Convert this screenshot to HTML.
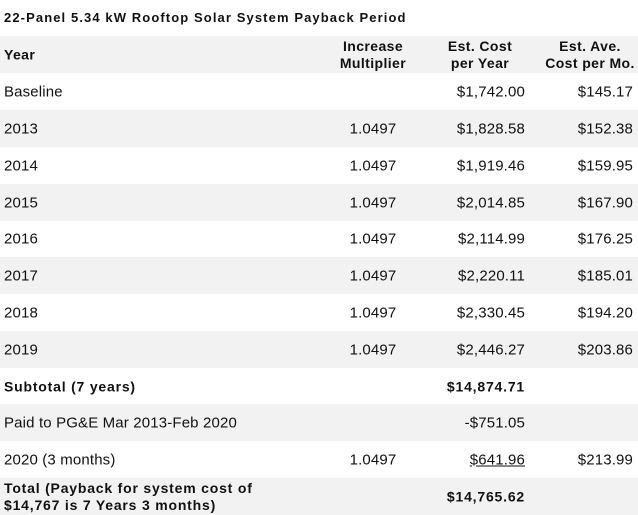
<!DOCTYPE html>
<html><head><style>
body{margin:0;width:638px;height:515px;background:#fff;font-family:"Liberation Sans",Arial,sans-serif;color:#111;overflow:hidden;position:relative}
.t{position:absolute;left:4px;top:10px;font-weight:bold;font-size:13px;letter-spacing:1.1px}
.r{position:absolute;left:0;width:638px;height:37px;font-size:15px;letter-spacing:0.15px}
.g{background:#f2f2f2}
.r div{position:absolute;top:50%;transform:translateY(-50%);line-height:17px;white-space:nowrap}
.a{left:4px}
.b{left:330px;width:86px;text-align:center}
.c{right:113px;text-align:right}
.d{right:5px;text-align:right}
.B{font-weight:bold;font-size:14px;letter-spacing:0.8px}
</style></head><body>
<div class="t">22-Panel 5.34 kW Rooftop Solar System Payback Period</div>
<div class="r g B" style="top:36px;letter-spacing:0.4px"><div class="a">Year</div><div class="b" style="left:320px;width:106px">Increase<br>Multiplier</div><div style="left:430px;width:100px;text-align:center">Est. Cost<br>per Year</div><div style="left:540px;width:100px;text-align:center">Est. Ave.<br>Cost per Mo.</div></div>
<div class="r" style="top:73px"><div class="a">Baseline</div><div class="c">$1,742.00</div><div class="d">$145.17</div></div>
<div class="r g" style="top:110px"><div class="a">2013</div><div class="b">1.0497</div><div class="c">$1,828.58</div><div class="d">$152.38</div></div>
<div class="r" style="top:147px"><div class="a">2014</div><div class="b">1.0497</div><div class="c">$1,919.46</div><div class="d">$159.95</div></div>
<div class="r g" style="top:184px"><div class="a">2015</div><div class="b">1.0497</div><div class="c">$2,014.85</div><div class="d">$167.90</div></div>
<div class="r" style="top:220px"><div class="a">2016</div><div class="b">1.0497</div><div class="c">$2,114.99</div><div class="d">$176.25</div></div>
<div class="r g" style="top:257px"><div class="a">2017</div><div class="b">1.0497</div><div class="c">$2,220.11</div><div class="d">$185.01</div></div>
<div class="r" style="top:294px"><div class="a">2018</div><div class="b">1.0497</div><div class="c">$2,330.45</div><div class="d">$194.20</div></div>
<div class="r g" style="top:331px"><div class="a">2019</div><div class="b">1.0497</div><div class="c">$2,446.27</div><div class="d">$203.86</div></div>
<div class="r B" style="top:368px"><div class="a">Subtotal (7 years)</div><div class="c">$14,874.71</div></div>
<div class="r g" style="top:404px"><div class="a">Paid to PG&amp;E Mar 2013-Feb 2020</div><div class="c">-$751.05</div></div>
<div class="r" style="top:441px"><div class="a">2020 (3 months)</div><div class="b">1.0497</div><div class="c" style="text-decoration:underline">$641.96</div><div class="d">$213.99</div></div>
<div class="r g B" style="top:478px"><div class="a">Total (Payback for system cost of<br>$14,767 is 7 Years 3 months)</div><div class="c">$14,765.62</div></div>
</body></html>
